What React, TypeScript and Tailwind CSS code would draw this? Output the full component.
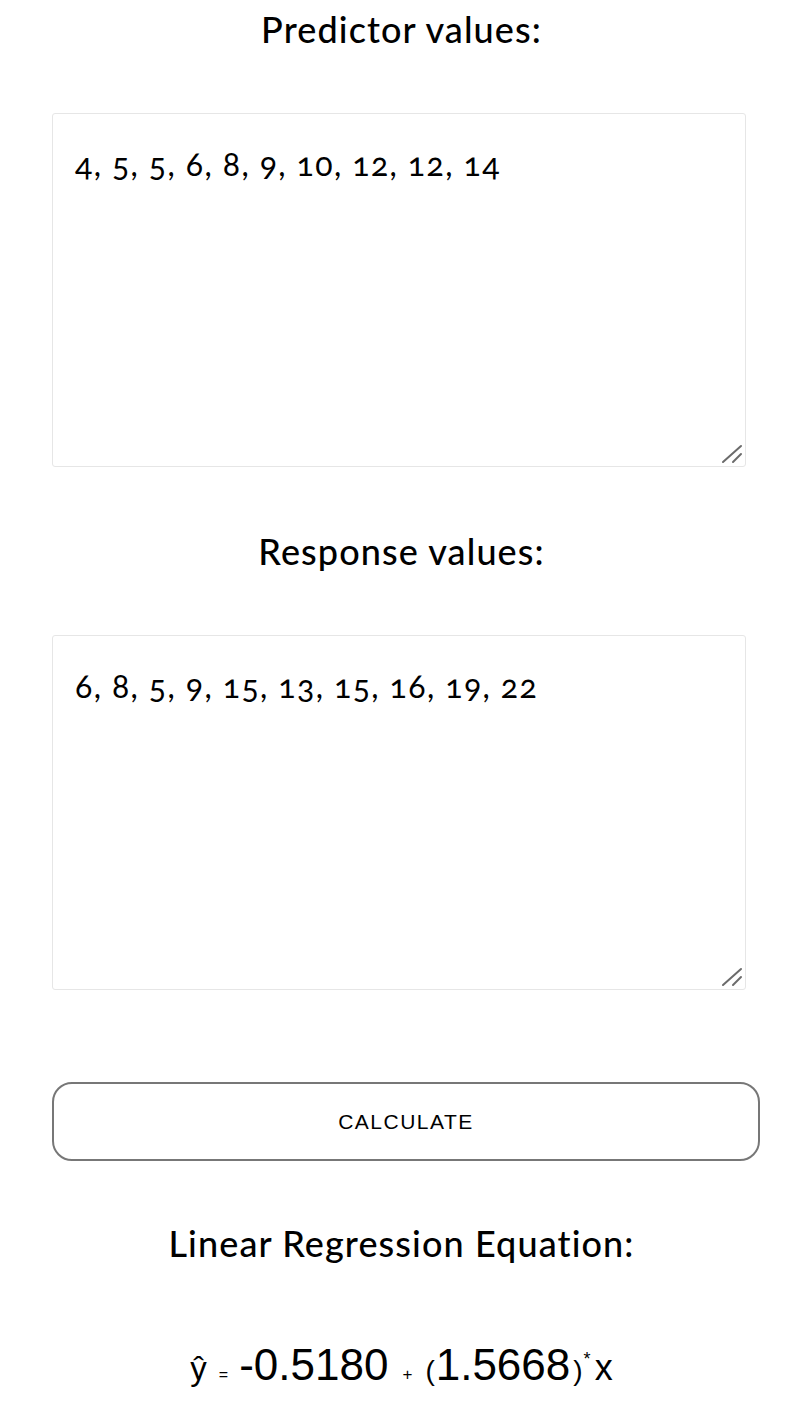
import React from "react";

const lato = { fontFamily: "Lato, 'Noto Sans', sans-serif" };
const arial = { fontFamily: "'Liberation Sans', Arial, sans-serif" };

function ResizeGrip() {
  return (
    <svg
      className="absolute right-[2px] bottom-[2px] pointer-events-none"
      width="24"
      height="22"
      viewBox="0 0 24 22"
    >
      <line x1="3" y1="19" x2="21" y2="3" stroke="#6b6b6b" strokeWidth="2" strokeLinecap="round" />
      <line x1="13" y1="19" x2="21" y2="11" stroke="#6b6b6b" strokeWidth="2" strokeLinecap="round" />
    </svg>
  );
}

function Area({ value, h }: { value: string; h: string }) {
  return (
    <div className="relative mt-[64px] w-[694px]">
      <textarea
        className={`block w-full ${h} border border-[#e6e6e6] rounded-[3px] pl-[22px] pr-[22px] pt-[33px] text-[32px] leading-[34px] tracking-[1.4px] outline-none resize-none`}
        style={{ fontFeatureSettings: "'onum' 1", fontFamily: "Lato, sans-serif" }}
        defaultValue={value}
      />
      <ResizeGrip />
    </div>
  );
}

export default function App() {
  return (
    <div className="min-h-[1401px] bg-white text-black px-[52px]" style={lato}>
      <h2 className="text-center text-[36px] font-medium leading-[40px] pt-[9px] tracking-[1.1px]">
        Predictor values:
      </h2>
      <Area value="4, 5, 5, 6, 8, 9, 10, 12, 12, 14" h="h-[354px]" />
      <h2 className="text-center text-[36px] font-medium leading-[40px] mt-[64px] tracking-[1.1px]">
        Response values:
      </h2>
      <Area value="6, 8, 5, 9, 15, 13, 15, 16, 19, 22" h="h-[355px]" />
      <button
        className="block mt-[92px] w-[708px] h-[79px] border-2 border-[#777777] rounded-[20px] bg-white text-[21px] tracking-[1.5px] text-black"
        style={arial}
      >
        CALCULATE
      </button>
      <h2 className="text-center text-[36px] font-medium leading-[40px] mt-[62px] tracking-[1.1px]">
        Linear Regression Equation:
      </h2>
      <div className="flex justify-center items-baseline mt-[77px] leading-[50px]" style={arial}>
        <span className="text-[33px]">ŷ</span>
        <span className="text-[16px] ml-[12px]">=</span>
        <span className="text-[44px] ml-[11px]">-0.5180</span>
        <span className="text-[17px] ml-[14px]">+</span>
        <span className="text-[28px] ml-[13px]">(</span>
        <span className="text-[44px] ml-[1px]">1.5668</span>
        <span className="text-[28px] ml-[3px]">)</span>
        <span className="text-[18px] ml-[1px] self-start mt-[10px] leading-[18px]">*</span>
        <span className="text-[36px] ml-[4px]">x</span>
      </div>
    </div>
  );
}
